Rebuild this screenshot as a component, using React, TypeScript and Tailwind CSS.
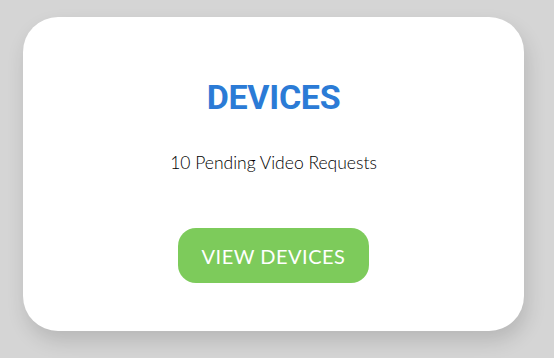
import React from 'react';

const App: React.FC = () => {
    return (
        <div className="w-[554px] h-[358px] bg-[#d5d5d5] pt-[17px] pl-[23px]">
            <div className="w-[501px] h-[314px] bg-white rounded-[35px] shadow-[3px_10px_20px_rgba(0,0,0,0.14)] flex flex-col items-center pt-[60px]">
                <h2 className="font-['Roboto',sans-serif] font-bold text-[34px] leading-[40px] text-[#2b7bd6] tracking-[-0.3px]">
                    DEVICES
                </h2>
                <p className="mt-[34px] font-['Lato',sans-serif] font-light text-[17.5px] leading-[24px] text-black">
                    10 Pending Video Requests
                </p>
                <button className="mt-[53px] w-[191px] h-[55px] rounded-[18px] bg-[#7dcb5b] text-white font-['Lato',sans-serif] text-[20px] tracking-[0.5px]">
                    VIEW DEVICES
                </button>
            </div>
        </div>
    );
};

export default App;
